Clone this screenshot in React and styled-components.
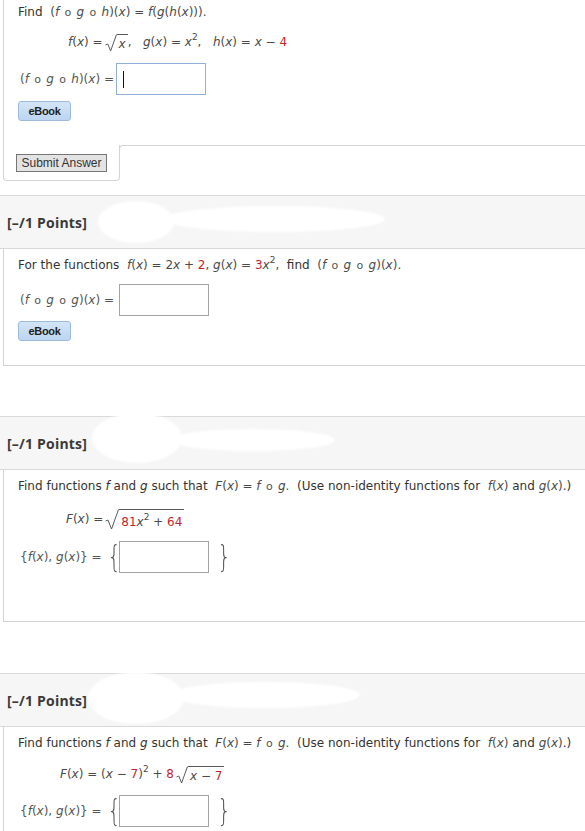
import React from 'react';
import styled, { createGlobalStyle } from 'styled-components';

const Global = createGlobalStyle`
  *, *::before, *::after { box-sizing: border-box; }
  html, body { margin: 0; padding: 0; background: #fff; }
  body {
    font-family: "DejaVu Sans", Verdana, sans-serif;
    color: #333;
    overflow: hidden;
  }
`;

const Page = styled.div`
  width: 585px;
  display: flex;
  flex-direction: column;
`;

const Header = styled.div`
  position: relative;
  margin-top: ${p => p.$mt}px;
  height: 54px;
  background: #f6f6f6;
  border-top: 1px solid #d9d9d9;
  border-bottom: 1px solid #d9d9d9;
  display: flex;
  align-items: center;
  padding-left: 7px;
  font-family: "Open Sans", "Noto Sans", sans-serif;
  font-weight: 700;
  font-size: 14px;
  letter-spacing: 0.2px;
  color: #3a3a3a;
`;

const Blob = styled.div`
  position: absolute;
  background: #fff;
  border-radius: 50%;
  filter: blur(1.2px);
`;

const Body = styled.div`
  margin-left: 3px;
  border-left: 1px solid #d4d4d4;
  border-bottom: ${p => (p.$open ? 'none' : '1px solid #d4d4d4')};
  padding: ${p => p.$pt}px 0 ${p => p.$pb}px 14px;
  display: flex;
  flex-direction: column;
  align-items: flex-start;
`;

const TextLine = styled.div`
  font-size: 12px;
  line-height: 18px;
  color: #333;
  white-space: pre;
`;

const M = styled.span`
  color: #4a4a4a;
`;

const I = styled.i`
  font-style: italic;
`;

const Red = styled.span`
  color: #c4262e;
`;

const Sup = styled.sup`
  font-size: 9px;
  line-height: 0;
  vertical-align: 6px;
`;

const Ring = styled.span`
  font-size: 11px;
  color: #555;
  margin: 0 1.5px;
`;

const Formula = styled.div`
  margin-top: ${p => p.$mt}px;
  margin-left: ${p => p.$ml}px;
  height: 22px;
  line-height: 22px;
  font-size: 12px;
  color: #4a4a4a;
  white-space: pre;
`;

const Radical = styled.span`
  display: inline-flex;
  align-items: stretch;
  vertical-align: middle;
  margin-left: 2px;
  line-height: 15px;
`;

const RadicalSign = styled.svg`
  width: ${p => p.$w}px;
  height: ${p => p.$h}px;
  flex: none;
  display: block;
`;

const Radicand = styled.span`
  border-top: 1px solid #5a5a5a;
  padding: ${p => p.$pt}px 2px 0 2px;
  line-height: 15px;
  white-space: pre;
`;

const AnswerRow = styled.div`
  margin-top: ${p => p.$mt}px;
  display: flex;
  align-items: center;
  padding-left: 2px;
  font-size: 12px;
  color: #555;
  white-space: pre;
`;

const AnswerBox = styled.div`
  flex: none;
  width: 90px;
  height: 32px;
  margin-left: ${p => p.$ml}px;
  border: 1px solid ${p => (p.$focus ? '#8fb0d8' : '#a3a3a3')};
  background: #fff;
  display: flex;
  align-items: center;
  padding-left: 6px;
`;

const Caret = styled.span`
  width: 1px;
  height: 17px;
  background: #111;
`;

const Brace = styled.span`
  flex: none;
  display: inline-block;
  width: 10px;
  text-align: center;
  font-family: "DejaVu Sans", sans-serif;
  font-weight: 200;
  font-size: 30px;
  line-height: 32px;
  color: #555;
  margin: ${p => p.$m};
  transform: scaleX(0.7);
`;

const EBook = styled.button`
  margin-top: ${p => p.$mt}px;
  width: 53px;
  height: 20px;
  padding: 0;
  border: 1px solid #9fbbdc;
  border-radius: 3px;
  background: linear-gradient(#d3e5f8, #bcd5f1);
  font-family: "Liberation Sans", Arial, sans-serif;
  font-weight: 700;
  font-size: 11px;
  letter-spacing: -0.3px;
  color: #1e1e1e;
`;

const Footer = styled.div`
  display: flex;
  margin-left: 3px;
`;

const SubmitCell = styled.div`
  width: 117px;
  border: 1px solid #d4d4d4;
  border-top: none;
  border-radius: 0 0 4px 4px;
  padding: 9px 0 8px 12px;
`;

const FooterFill = styled.div`
  flex: 1;
  height: 8px;
  margin-left: -1px;
  border-top: 1px solid #d4d4d4;
  border-left: 1px solid #d4d4d4;
  border-top-left-radius: 4px;
`;

const SubmitButton = styled.button`
  display: block;
  width: 91px;
  height: 18px;
  padding: 0;
  border: 1px solid #767676;
  background: #e3e3e3;
  font-family: "Liberation Sans", Arial, sans-serif;
  font-size: 12px;
  color: #333;
`;

const Compose = () => (
  <span>
    {' '}
    <Ring>o</Ring>{' '}
  </span>
);

const SqrtSmall = ({ children }) => (
  <Radical>
    <RadicalSign $w={12} $h={18} viewBox="0 0 12 18" preserveAspectRatio="none">
      <path d="M0.5 11 L2.8 10 L5.6 17 L11.5 0.5" fill="none" stroke="#5a5a5a" strokeWidth="1" />
    </RadicalSign>
    <Radicand $pt={2}>{children}</Radicand>
  </Radical>
);

const SqrtBig = ({ children }) => (
  <Radical>
    <RadicalSign $w={14} $h={21} viewBox="0 0 14 21" preserveAspectRatio="none">
      <path d="M0.5 12 L3 11 L6.5 20 L13.5 0.5" fill="none" stroke="#5a5a5a" strokeWidth="1" />
    </RadicalSign>
    <Radicand $pt={5}>{children}</Radicand>
  </Radical>
);

const FX = ({ f = 'f' }) => (
  <>
    <I>{f}</I>(<I>x</I>)
  </>
);

const PairLabel = () => (
  <span>
    {'{'}
    <FX />, <FX f="g" />
    {'}'} =
  </span>
);

const Q3Text = () => (
  <TextLine>
    Find functions <I>f</I> and <I>g</I> such that{'  '}
    <M>
      <FX f="F" /> = <I>f</I>
      <Compose />
      <I>g</I>.
    </M>
    {'  '}(Use non-identity functions for{'  '}
    <M>
      <FX />
    </M>{' '}
    and{' '}
    <M>
      <FX f="g" />
    </M>
    .)
  </TextLine>
);

const PairAnswer = ({ mt }) => (
  <AnswerRow $mt={mt}>
    <PairLabel />
    <Brace $m="0 0 0 4px">{'{'}</Brace>
    <AnswerBox $ml={3} />
    <Brace $m="0 0 0 7px">{'}'}</Brace>
  </AnswerRow>
);

export default function App() {
  return (
    <Page>
      <Global />

      <Body $pt={3} $pb={24} $open>
        <TextLine>
          Find{'  '}
          <M>
            (<I>f</I>
            <Compose />
            <I>g</I>
            <Compose />
            <I>h</I>)(<I>x</I>) = <I>f</I>(<I>g</I>(<I>h</I>(<I>x</I>))).
          </M>
        </TextLine>
        <Formula $mt={9} $ml={50}>
          <FX /> =
          <SqrtSmall>
            <I>x</I>
          </SqrtSmall>
          ,   <FX f="g" /> = <I>x</I>
          <Sup>2</Sup>,   <FX f="h" /> = <I>x</I> − <Red>4</Red>
        </Formula>
        <AnswerRow $mt={10}>
          <span>
            (<I>f</I>
            <Compose />
            <I>g</I>
            <Compose />
            <I>h</I>)(<I>x</I>) =
          </span>
          <AnswerBox $ml={2} $focus>
            <Caret />
          </AnswerBox>
        </AnswerRow>
        <EBook $mt={6}>eBook</EBook>
      </Body>
      <Footer>
        <SubmitCell>
          <SubmitButton>Submit Answer</SubmitButton>
        </SubmitCell>
        <FooterFill />
      </Footer>

      <Header $mt={14}>
        [–/1 Points]
        <Blob style={{ left: 98, top: 5, width: 76, height: 42 }} />
        <Blob style={{ left: 165, top: 10, width: 220, height: 26 }} />
      </Header>
      <Body $pt={7} $pb={24}>
        <TextLine>
          For the functions{'  '}
          <M>
            <FX /> = 2<I>x</I> + <Red>2</Red>, <FX f="g" /> = <Red>3</Red>
            <I>x</I>
            <Sup>2</Sup>,
          </M>{'  '}
          find{'  '}
          <M>
            (<I>f</I>
            <Compose />
            <I>g</I>
            <Compose />
            <I>g</I>)(<I>x</I>).
          </M>
        </TextLine>
        <AnswerRow $mt={9}>
          <span>
            (<I>f</I>
            <Compose />
            <I>g</I>
            <Compose />
            <I>g</I>)(<I>x</I>) =
          </span>
          <AnswerBox $ml={5} />
        </AnswerRow>
        <EBook $mt={5}>eBook</EBook>
      </Body>

      <Header $mt={50}>
        [–/1 Points]
        <Blob style={{ left: 92, top: -4, width: 90, height: 50 }} />
        <Blob style={{ left: 170, top: 12, width: 165, height: 22 }} />
      </Header>
      <Body $pt={7} $pb={48}>
        <Q3Text />
        <Formula $mt={12} $ml={48}>
          <FX f="F" /> =
          <SqrtBig>
            <Red>81</Red>
            <I>x</I>
            <Sup>2</Sup> + <Red>64</Red>
          </SqrtBig>
        </Formula>
        <PairAnswer mt={11} />
      </Body>

      <Header $mt={51}>
        [–/1 Points]
        <Blob style={{ left: 88, top: -2, width: 96, height: 52 }} />
        <Blob style={{ left: 170, top: 8, width: 190, height: 26 }} />
      </Header>
      <Body $pt={7} $pb={20} $open>
        <Q3Text />
        <Formula $mt={10} $ml={42}>
          <FX f="F" /> = (<I>x</I> − <Red>7</Red>)<Sup>2</Sup> + <Red>8</Red>
          <SqrtSmall>
            <I>x</I> − <Red>7</Red>
          </SqrtSmall>
        </Formula>
        <PairAnswer mt={10} />
      </Body>
    </Page>
  );
}
